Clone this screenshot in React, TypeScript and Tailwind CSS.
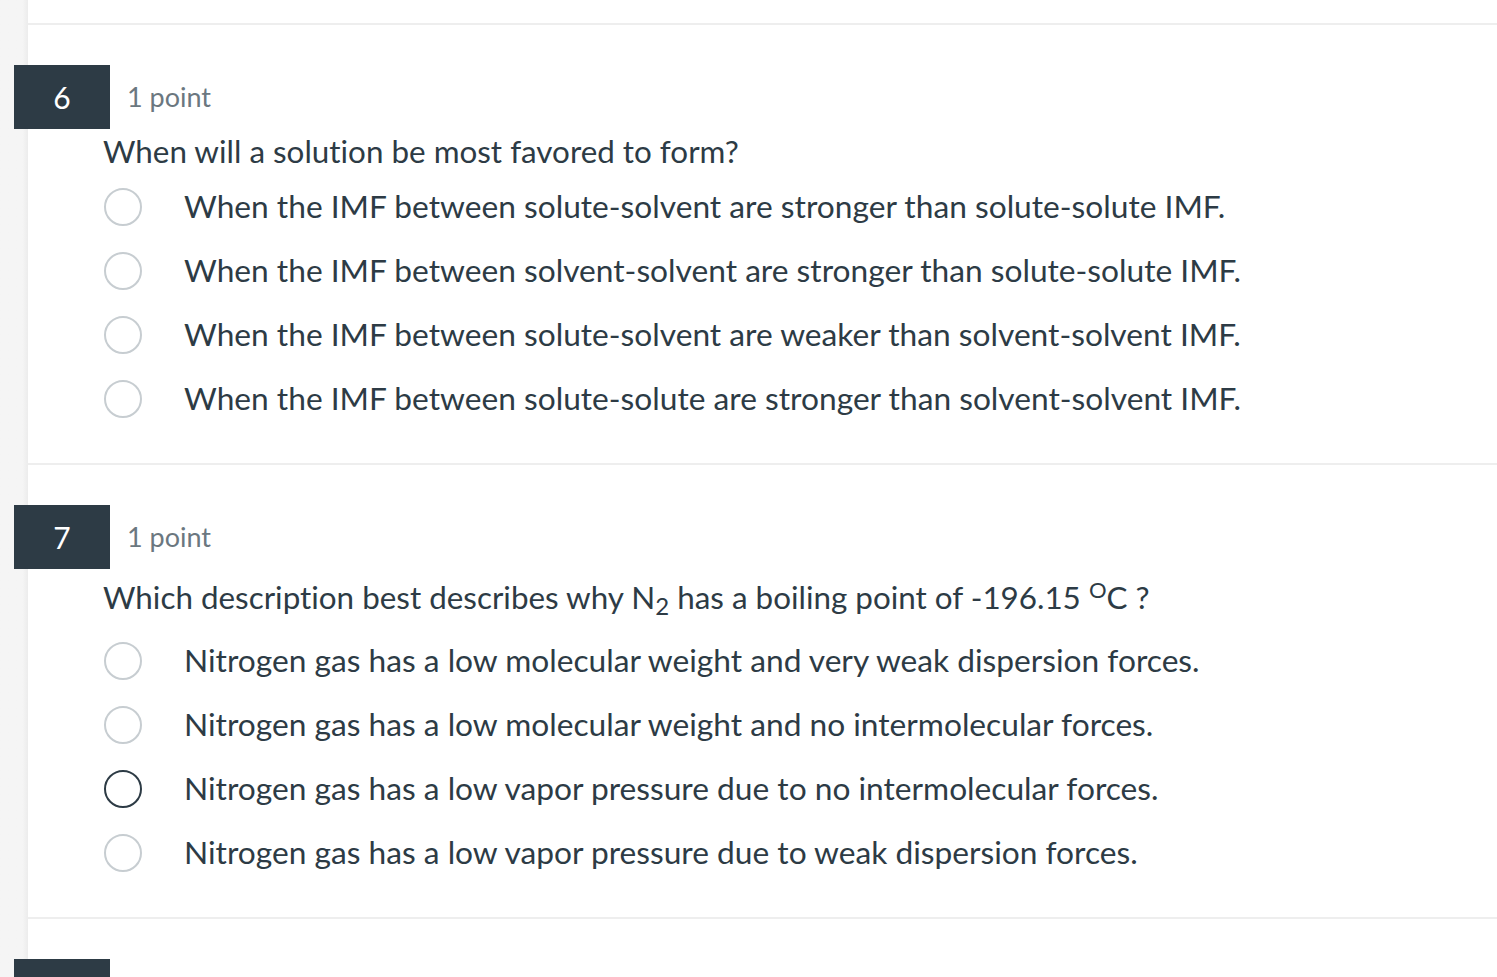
import React from "react";

type Question = {
  num: number;
  prompt: React.ReactNode;
  options: string[];
  active?: number;
  tall?: boolean;
};

const questions: Question[] = [
  {
    num: 6,
    prompt: "When will a solution be most favored to form?",
    options: [
      "When the IMF between solute-solvent are stronger than solute-solute IMF.",
      "When the IMF between solvent-solvent are stronger than solute-solute IMF.",
      "When the IMF between solute-solvent are weaker than solvent-solvent IMF.",
      "When the IMF between solute-solute are stronger than solvent-solvent IMF.",
    ],
  },
  {
    num: 7,
    tall: true,
    prompt: (
      <>
        Which description best describes why N<sub className="text-[24px]">2</sub> has a boiling point of -196.15{" "}
        <sup className="text-[22px]">O</sup>C ?
      </>
    ),
    options: [
      "Nitrogen gas has a low molecular weight and very weak dispersion forces.",
      "Nitrogen gas has a low molecular weight and no intermolecular forces.",
      "Nitrogen gas has a low vapor pressure due to no intermolecular forces.",
      "Nitrogen gas has a low vapor pressure due to weak dispersion forces.",
    ],
    active: 2,
  },
];

function Divider() {
  return <div className="h-[2px] bg-[#eeeeee]" />;
}

// dark number tab, pokes out over the grey gutter
function Badge({ num }: { num?: number }) {
  return (
    <div className="-ml-[14px] flex h-[64px] w-[96px] shrink-0 items-center justify-center bg-[#2d3b45] text-[30px] text-white">
      {num}
    </div>
  );
}

function QuestionBlock({ q }: { q: Question }) {
  return (
    <div className="pt-[40px] pb-[32px]">
      <div className="flex items-center">
        <Badge num={q.num} />
        <span className="ml-[17px] text-[27px] text-[#6b7780]">1 point</span>
      </div>
      <div
        className={`pl-[75px] text-[31.4px] leading-[36px] text-[#2d3b45] ${
          q.tall ? "pt-[10px] pb-[14px]" : "pt-[4px] pb-[6px]"
        }`}
      >
        {q.prompt}
      </div>
      <div className="flex flex-col">
        {q.options.map((opt, i) => (
          <div key={i} className="flex h-[64px] items-center pl-[76px]">
            <span
              className={`h-[38px] w-[38px] shrink-0 rounded-full border-2 bg-white ${
                q.active === i ? "border-[#2d3b45]" : "border-[#c7cdd1]"
              }`}
            />
            <span className="ml-[42px] text-[31.7px] text-[#2d3b45]">{opt}</span>
          </div>
        ))}
      </div>
    </div>
  );
}

export default function App() {
  return (
    <div className="flex h-[977px] w-full overflow-hidden bg-white font-['Lato',sans-serif] [font-variant-ligatures:none]">
      <div className="w-[28px] shrink-0 bg-gradient-to-r from-[#f5f5f5] from-80% to-[#ececec]" />
      <div className="flex-1">
        <div className="h-[23px]" />
        <Divider />
        {questions.map((q) => (
          <React.Fragment key={q.num}>
            <QuestionBlock q={q} />
            <Divider />
          </React.Fragment>
        ))}
        <div className="pt-[40px]">
          <Badge />
        </div>
      </div>
    </div>
  );
}
